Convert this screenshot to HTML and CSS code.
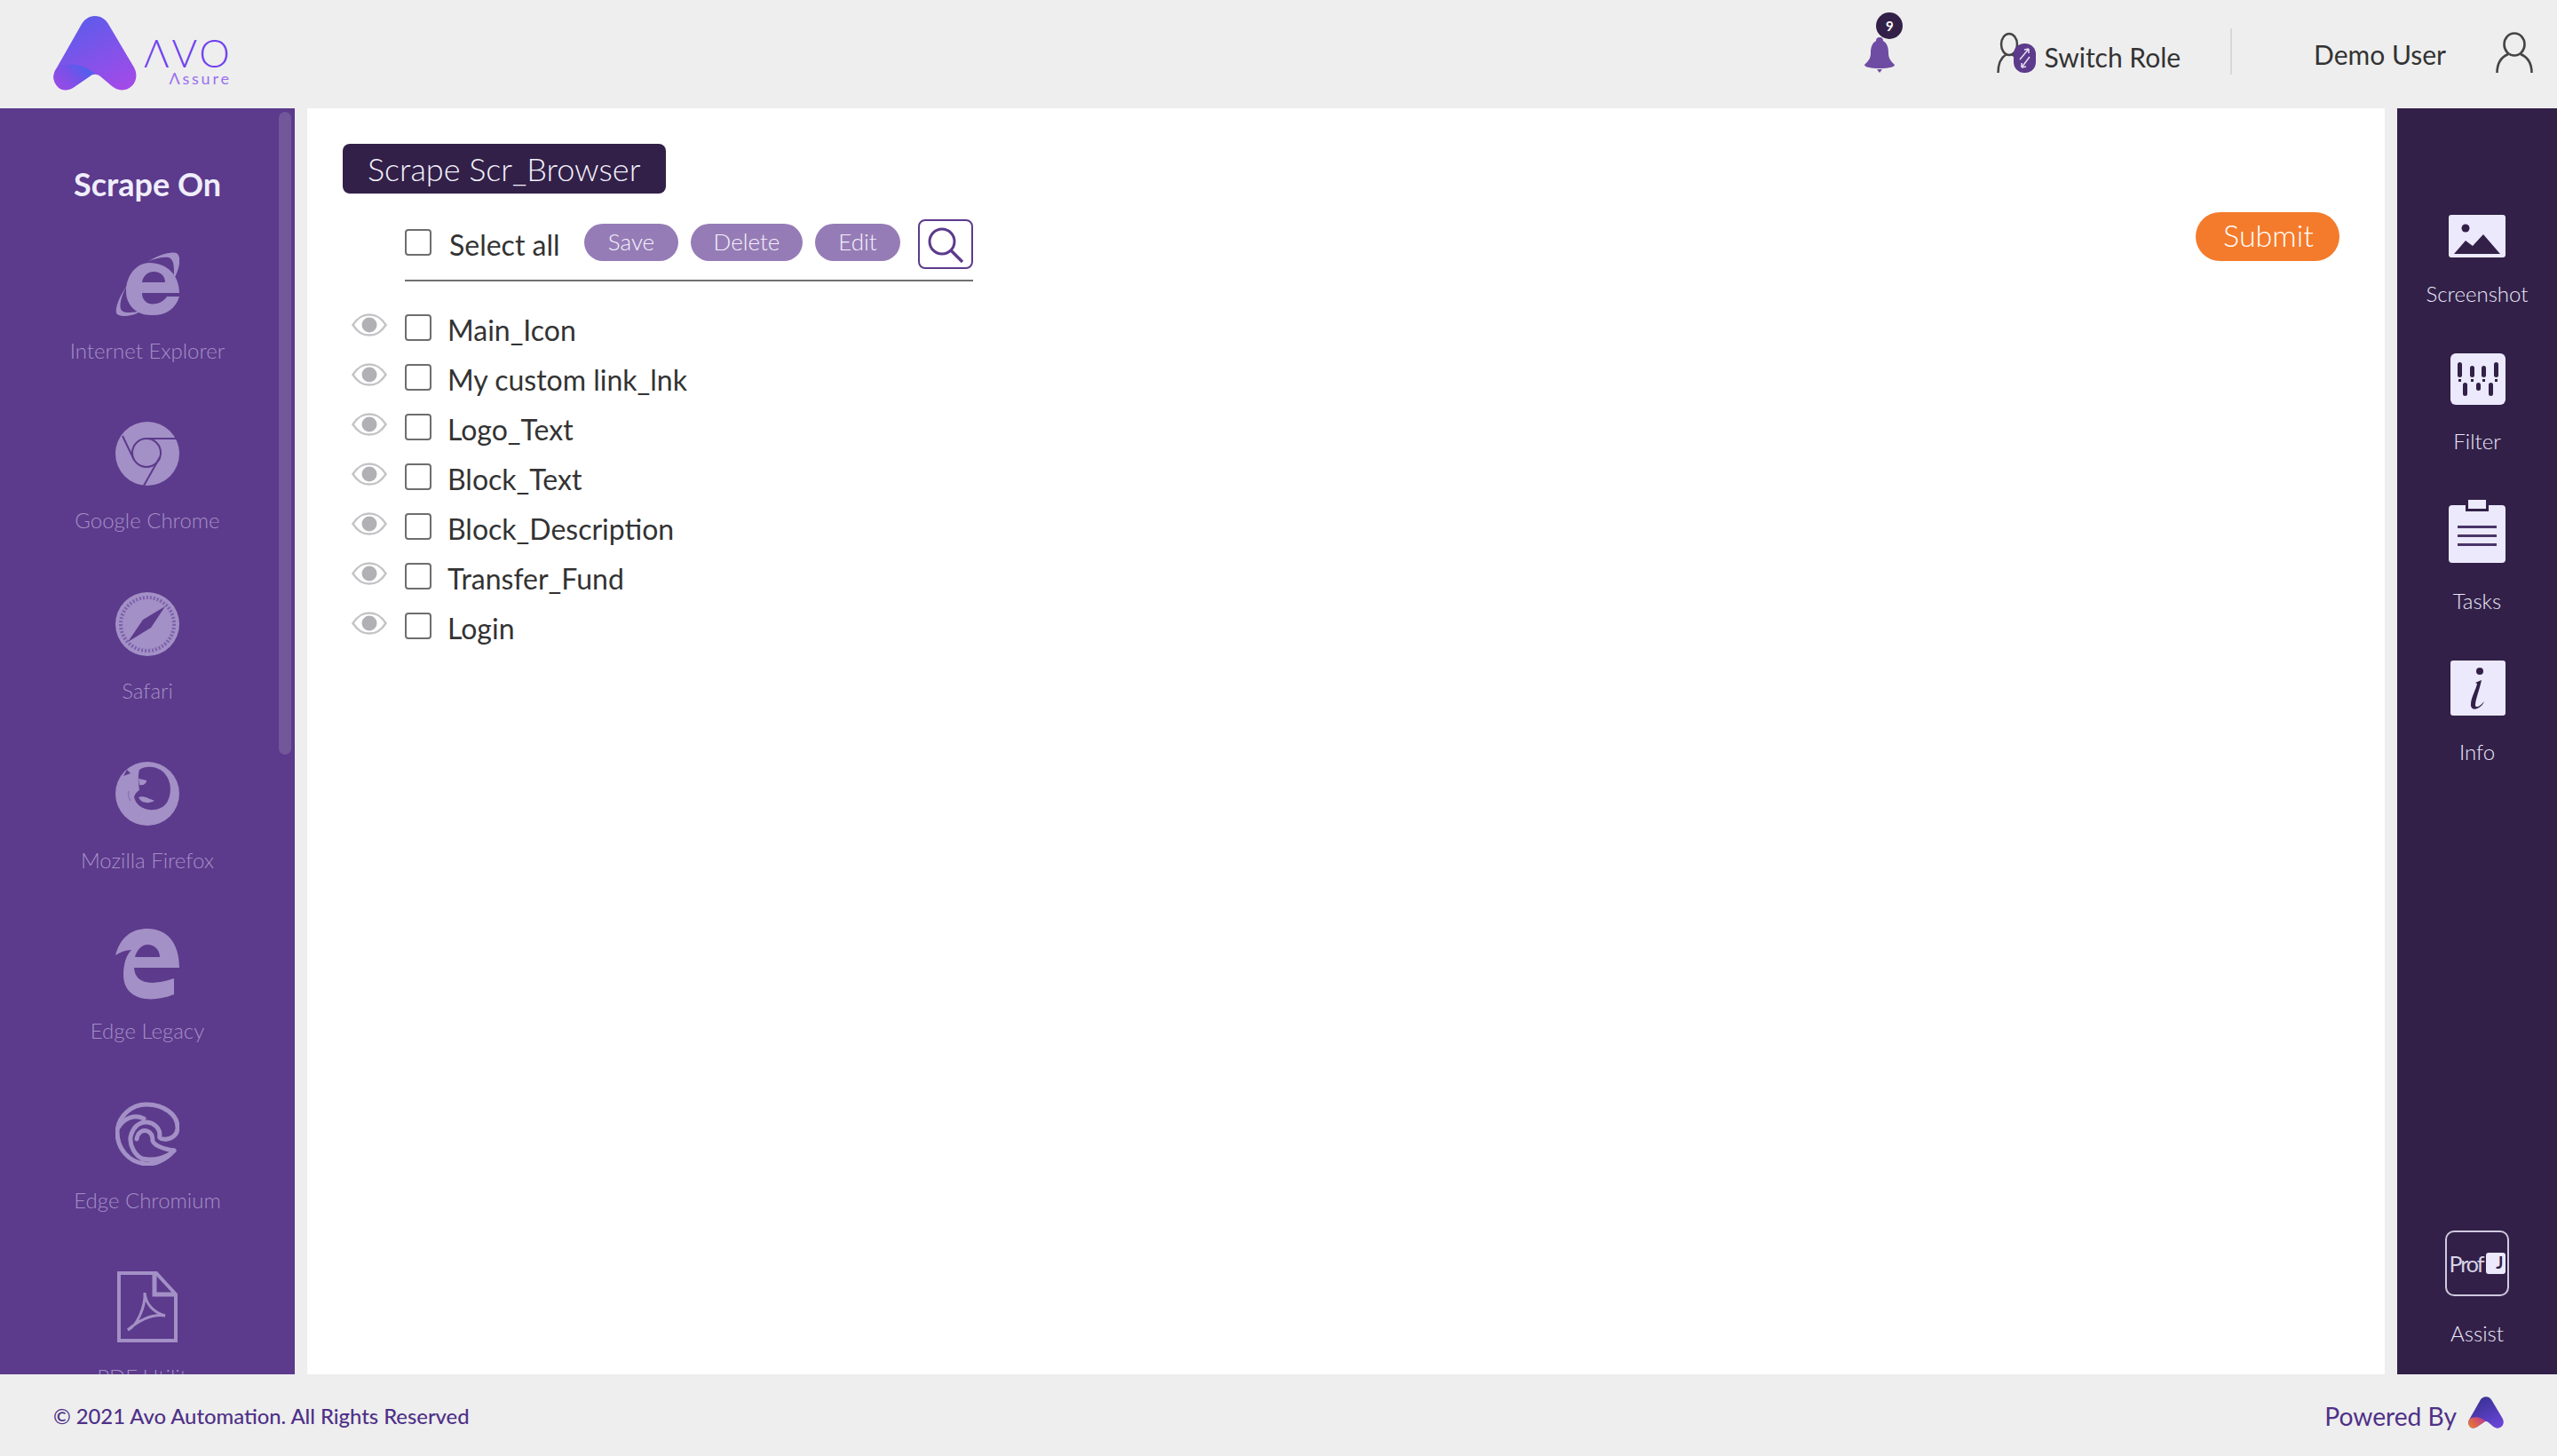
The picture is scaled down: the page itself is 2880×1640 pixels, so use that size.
FILE: index.html
```html
<!DOCTYPE html>
<html lang="en">
<head>
    <meta charset="UTF-8">
    <title>Avo Assure - Scrape</title>
    <link rel="stylesheet" href="styles.css">
</head>
<body>
    <svg class="defs" width="0" height="0">
        <defs>
            <linearGradient id="logoMain" x1="0.25" y1="0" x2="0.8" y2="1">
                <stop offset="0" stop-color="#5a5cec"/>
                <stop offset="1" stop-color="#a24be8"/>
            </linearGradient>
            <linearGradient id="logoWave" x1="0" y1="1" x2="1" y2="0.35">
                <stop offset="0" stop-color="#a04be4"/>
                <stop offset="0.55" stop-color="#7a50e8"/>
                <stop offset="1" stop-color="#4a62ee"/>
            </linearGradient>
            <linearGradient id="footMain" x1="0.2" y1="0" x2="0.8" y2="1">
                <stop offset="0" stop-color="#35308f"/>
                <stop offset="1" stop-color="#6a45d8"/>
            </linearGradient>
            <linearGradient id="footWave" x1="0" y1="1" x2="1" y2="0.4">
                <stop offset="0" stop-color="#f08020"/>
                <stop offset="1" stop-color="#c0408c"/>
            </linearGradient>
            <symbol id="eye" viewBox="0 0 40 26">
                <path d="M1.5 13 C8 3 14 1.5 20 1.5 C26 1.5 32 3 38.5 13 C32 23 26 24.5 20 24.5 C14 24.5 8 23 1.5 13Z" fill="none" stroke="#c4c4c6" stroke-width="2.5"/>
                <circle cx="20" cy="13" r="8.5" fill="#b1b1b5"/>
            </symbol>
        </defs>
    </svg>

    <header class="top-bar">
        <div class="brand">
            <svg class="brand-mark" viewBox="0 0 94 84" width="94" height="84">
                <path d="M47 0 C54 0 59 4 62 9 L91 58 C96 67 93 78 84 82 C77 85 71 83 66 79 L53 68 C49 65 45 65 41 68 L22 81 C15 85 7 84 3 77 C-1 71 0 65 3 60 L32 9 C35 4 40 0 47 0Z" fill="url(#logoMain)"/>
                <path d="M3 60 C13 52 31 52 47 65 C44 65 43 66 41 68 L22 81 C15 85 7 84 3 77 C-1 71 0 65 3 60Z" fill="url(#logoWave)"/>
            </svg>
            <div class="brand-text">
                <span class="brand-avo">ΛVO</span>
                <span class="brand-sub">Λssure</span>
            </div>
        </div>
        <div class="top-actions">
            <div class="bell">
                <svg viewBox="0 0 36 42" width="36" height="42">
                    <path d="M18 2 C21 2 22 4 22 6 C27 9 28 14 28 20 C28 26 31 29 35 33 C35 35 30 37 18 37 C6 37 1 35 1 33 C5 29 8 26 8 20 C8 14 9 9 14 6 C14 4 15 2 18 2Z" fill="#6f4ca3"/>
                    <path d="M15 38 L21 38 L18 42Z" fill="#6f4ca3"/>
                </svg>
                <span class="bell-badge">9</span>
            </div>
            <div class="switch-role">
                <svg viewBox="0 0 46 46" width="46" height="46">
                    <ellipse cx="14" cy="14" rx="9" ry="12" fill="none" stroke="#444" stroke-width="2.5"/>
                    <path d="M1.5 46 C1.5 34 6 28 11 25 M17 25 C20 27 22 29 24 32" fill="none" stroke="#444" stroke-width="2.5"/>
                    <rect x="19" y="13" width="25" height="33" rx="12" fill="#5c3a8c"/>
                    <path d="M26 31 L36 19 M36 19 L31 20 M36 19 L36 24 M37 28 L28 40 M28 40 L33 39 M28 40 L28 35" fill="none" stroke="#e6dff2" stroke-width="1.5"/>
                </svg>
                <span>Switch Role</span>
            </div>
            <div class="divider"></div>
            <span class="user-name">Demo User</span>
            <svg class="user-icon" viewBox="0 0 42 46" width="42" height="46">
                <ellipse cx="21" cy="14" rx="11.5" ry="12.5" fill="none" stroke="#444" stroke-width="2.6"/>
                <path d="M1.5 46 C1.5 34 7 28 14 25 M28 25 C35 28 40.5 34 40.5 46" fill="none" stroke="#444" stroke-width="2.6"/>
            </svg>
        </div>
    </header>

    <div class="middle">
        <aside class="browser-panel">
            <h3 class="panel-title">Scrape On</h3>
            <div class="browser-item">
                <div class="browser-icon">
                    <svg viewBox="0 0 72 72" width="72" height="72">
                        <path fill-rule="evenodd" d="M38 12 C58 12 72 26 72 46 L30 46 C30 56 38 60 46 58 C52 57 56 53 58 50 L72 50 C68 64 56 72 40 71 C24 71 12 60 12 44 C12 26 24 12 38 12Z M30 34 L56 34 C56 26 50 22 43 22 C36 22 31 27 30 34Z"/>
                        <path d="M36 11 C50 2 66 -2 70 2 C75 8 71 22 65 32 C67 18 66 8 60 6 C54 5 44 7 36 11Z"/>
                        <path d="M14 36 C4 50 -2 66 2 70 C8 74 20 72 30 66 C20 68 8 70 6 64 C4 58 8 46 14 36Z"/>
                    </svg>
                </div>
                <span class="browser-label">Internet Explorer</span>
            </div>
            <div class="browser-item">
                <div class="browser-icon">
                    <svg viewBox="0 0 72 72" width="72" height="72">
                        <circle cx="36" cy="36" r="36"/>
                        <g fill="none" stroke="#5c3a8c" stroke-width="2">
                            <circle cx="35" cy="35" r="16"/>
                            <path d="M35 19 L69 19 M8 16 L21 43 M50 40 L32 72"/>
                        </g>
                    </svg>
                </div>
                <span class="browser-label">Google Chrome</span>
            </div>
            <div class="browser-item">
                <div class="browser-icon">
                    <svg viewBox="0 0 72 72" width="72" height="72">
                        <circle cx="36" cy="36" r="36"/>
                        <circle cx="36" cy="36" r="30" fill="none" stroke="#7d60ab" stroke-width="4" stroke-dasharray="2 2"/>
                        <path d="M56 16 L40 40 L14 56 L31 31Z" fill="#5c3a8c"/>
                    </svg>
                </div>
                <span class="browser-label">Safari</span>
            </div>
            <div class="browser-item">
                <div class="browser-icon">
                    <svg viewBox="0 0 72 72" width="72" height="72">
                        <circle cx="36" cy="36" r="36"/>
                        <path d="M27 9 C36 3 50 6 56 14 C63 22 64 36 58 46 C54 52 46 55 38 54 C30 53 23 48 21 40 C22 36 24 34 27 32 C26 24 25 16 27 9Z" fill="#5c3a8c"/>
                        <path d="M26 19 L35 21 C35 25 31 27 27 26Z"/>
                        <path d="M26 40 C32 38 36 41 44 44 C38 47 30 48 26 40Z"/>
                        <path d="M13 9 L17 13 L9 16Z M3 8 L6 2 L9 11 L2 15Z" fill="#5c3a8c"/>
                        <path d="M15 33 C14 37 15 41 17 44" fill="none" stroke="#8c74b6" stroke-width="1.5"/>
                    </svg>
                </div>
                <span class="browser-label">Mozilla Firefox</span>
            </div>
            <div class="browser-item">
                <div class="browser-icon">
                    <svg viewBox="0 0 72 80" width="72" height="80">
                        <path fill-rule="evenodd" d="M0 30 C6 8 20 0 36 0 C58 0 72 16 72 44 L21 44 C22 60 36 66 66 56 L66 74 C36 86 9 78 9 52 C9 40 12 30 18 24 C12 24 6 26 0 30Z M22 32 L50 32 C50 24 44 18 36 18 C30 18 24 24 22 32Z"/>
                    </svg>
                </div>
                <span class="browser-label">Edge Legacy</span>
            </div>
            <div class="browser-item">
                <div class="browser-icon">
                    <svg viewBox="0 0 72 72" width="72" height="72">
                        <g class="swirl" fill="none" stroke-width="5" stroke-linecap="round">
                            <path d="M66 55 C56 66 44 71 34 70 C14 68 2 52 2 34 C3 16 18 3 35 3 C54 3 70 14 70 29 C70 38 62 43 54 42 C50 42 49 40 50 37 C50 30 44 24 36 23 C26 22 19 30 17 40 C16 50 22 60 30 64 C44 67 58 63 66 55"/>
                            <path d="M4 28 C10 18 22 14 32 19"/>
                            <path d="M24 42 C25 35 30 31 36 33 C41 35 42 39 42 44 C44 50 54 53 66 55"/>
                        </g>
                    </svg>
                </div>
                <span class="browser-label">Edge Chromium</span>
            </div>
            <div class="browser-item browser-item-pdf">
                <div class="browser-icon">
                    <svg viewBox="0 0 68 80" width="68" height="80">
                        <g class="swirl" fill="none" stroke-width="4">
                            <path d="M2 2 L44 2 L66 26 L66 78 L2 78Z"/>
                            <path d="M42 2 L42 26 L66 26" stroke-width="5"/>
                            <path d="M12 66 C22 62 32 40 31 24 C32 36 40 46 54 50 C40 48 26 54 12 66Z" stroke-width="3"/>
                        </g>
                    </svg>
                </div>
                <span class="browser-label">PDF Utility</span>
            </div>
            <div class="panel-scrollbar"></div>
        </aside>

        <main class="content">
            <div class="content-head">
                <div>
                    <div class="scrape-title">Scrape Scr_Browser</div>
                    <div class="toolbar">
                        <span class="check"></span>
                        <span class="select-all">Select all</span>
                        <button class="pill pill-save">Save</button>
                        <button class="pill pill-delete">Delete</button>
                        <button class="pill pill-edit">Edit</button>
                        <span class="search-box">
                            <svg viewBox="0 0 44 44" width="44" height="44">
                                <circle cx="18" cy="19" r="14" fill="none" stroke="#5c3a8c" stroke-width="3"/>
                                <path d="M28 29 L41 42" stroke="#5c3a8c" stroke-width="3.4"/>
                            </svg>
                        </span>
                    </div>
                </div>
                <button class="submit">Submit</button>
            </div>
            <ul class="object-list">
                <li class="object-row"><svg class="eye-icon"><use href="#eye"/></svg><span class="check"></span><span class="object-name">Main_Icon</span></li>
                <li class="object-row"><svg class="eye-icon"><use href="#eye"/></svg><span class="check"></span><span class="object-name">My custom link_lnk</span></li>
                <li class="object-row"><svg class="eye-icon"><use href="#eye"/></svg><span class="check"></span><span class="object-name">Logo_Text</span></li>
                <li class="object-row"><svg class="eye-icon"><use href="#eye"/></svg><span class="check"></span><span class="object-name">Block_Text</span></li>
                <li class="object-row"><svg class="eye-icon"><use href="#eye"/></svg><span class="check"></span><span class="object-name">Block_Description</span></li>
                <li class="object-row"><svg class="eye-icon"><use href="#eye"/></svg><span class="check"></span><span class="object-name">Transfer_Fund</span></li>
                <li class="object-row"><svg class="eye-icon"><use href="#eye"/></svg><span class="check"></span><span class="object-name">Login</span></li>
            </ul>
        </main>

        <aside class="action-panel">
            <div class="action-item action-screenshot">
                <svg viewBox="0 0 64 48" width="64" height="48">
                    <rect width="64" height="48" rx="3" fill="#ebe9fb"/>
                    <circle cx="19" cy="15" r="4.5" fill="#322048"/>
                    <path d="M6 44 L19 29 L27 35 L39 22 L58 44Z" fill="#322048"/>
                </svg>
                <span>Screenshot</span>
            </div>
            <div class="action-item action-filter">
                <svg viewBox="0 0 62 58" width="62" height="58">
                    <rect width="62" height="58" rx="6" fill="#ebe9fb"/>
                    <g fill="#322048">
                        <rect x="8" y="10" width="5" height="17" rx="2.5"/><rect x="9" y="29" width="3" height="3"/>
                        <rect x="22" y="14" width="5" height="13" rx="2.5"/><rect x="23" y="29" width="3" height="3"/>
                        <rect x="35" y="14" width="5" height="13" rx="2.5"/><rect x="36" y="29" width="3" height="3"/>
                        <rect x="49" y="10" width="5" height="17" rx="2.5"/><rect x="50" y="29" width="3" height="3"/>
                        <rect x="14" y="33" width="5" height="15" rx="2.5"/>
                        <rect x="29" y="33" width="5" height="9" rx="2.5"/>
                        <rect x="43" y="33" width="5" height="15" rx="2.5"/>
                    </g>
                </svg>
                <span>Filter</span>
            </div>
            <div class="action-item action-tasks">
                <svg viewBox="0 0 64 71" width="64" height="71">
                    <path d="M4 6 L19 6 L19 13 L45 13 L45 6 L60 6 Q64 6 64 10 L64 67 Q64 71 60 71 L4 71 Q0 71 0 67 L0 10 Q0 6 4 6Z" fill="#ebe9fb"/>
                    <rect x="22" y="0" width="20" height="10" fill="#ebe9fb"/>
                    <g fill="#4a3468">
                        <rect x="10" y="29" width="44" height="3"/>
                        <rect x="10" y="39" width="44" height="3"/>
                        <rect x="10" y="49" width="44" height="3"/>
                    </g>
                </svg>
                <span>Tasks</span>
            </div>
            <div class="action-item action-info">
                <svg viewBox="0 0 62 62" width="62" height="62">
                    <rect width="62" height="62" rx="3" fill="#ebe9fb"/>
                    <circle cx="33" cy="12" r="4" fill="#322048"/>
                    <path d="M28 25 L35 22 C33 32 28 44 28 50 C28 54 33 52 38 46 C34 56 22 58 23 49 C23 42 29 32 30 26Z" fill="#322048"/>
                </svg>
                <span>Info</span>
            </div>
            <div class="action-item action-assist">
                <div class="assist-box">
                    <span class="assist-prof">Prof</span><span class="assist-j">J</span>
                </div>
                <span>Assist</span>
            </div>
        </aside>
    </div>

    <footer class="bottom-bar">
        <span class="copyright">© 2021 Avo Automation. All Rights Reserved</span>
        <div class="powered">
            <span>Powered By</span>
            <svg viewBox="0 0 94 84" width="40" height="36">
                <path d="M47 0 C54 0 59 4 62 9 L91 58 C96 67 93 78 84 82 C77 85 71 83 66 79 L53 68 C49 65 45 65 41 68 L22 81 C15 85 7 84 3 77 C-1 71 0 65 3 60 L32 9 C35 4 40 0 47 0Z" fill="url(#footMain)"/>
                <path d="M3 60 C13 52 31 52 47 65 C44 65 43 66 41 68 L22 81 C15 85 7 84 3 77 C-1 71 0 65 3 60Z" fill="url(#footWave)"/>
            </svg>
        </div>
    </footer>
</body>
</html>
```

FILE: styles.css
```css
* {
    box-sizing: border-box;
}
html, body {
    height: 100%;
}
body {
    margin: 0;
    display: flex;
    flex-direction: column;
    background-color: #eeeeee;
    color: #333;
    font-family: Lato, "Open Sans", sans-serif;
    overflow: hidden;
}
.defs {
    position: absolute;
}

/* header */
.top-bar {
    height: 122px;
    flex: none;
    display: flex;
    justify-content: space-between;
    padding: 18px 27px 0 60px;
}
.brand {
    display: flex;
    align-items: flex-start;
}
.brand-text {
    display: flex;
    flex-direction: column;
    align-items: flex-end;
    margin-left: 8px;
    margin-top: 21px;
    color: #6f42f0;
}
.brand-avo {
    font-size: 43.5px;
    font-weight: 300;
    letter-spacing: 3px;
    line-height: 40px;
    margin-right: -3px;
}
.brand-sub {
    font-size: 18px;
    letter-spacing: 2.8px;
    line-height: 18px;
    margin-right: -2px;
    color: #9a6ff0;
}
.top-actions {
    display: flex;
    align-items: flex-start;
}
.bell {
    position: relative;
    width: 36px;
    margin-top: 22px;
}
.bell-badge {
    position: absolute;
    left: 14px;
    top: -26px;
    width: 30px;
    height: 30px;
    border-radius: 50%;
    background-color: #322048;
    color: #fff;
    font-size: 15px;
    font-weight: 700;
    line-height: 30px;
    text-align: center;
}
.switch-role {
    display: flex;
    align-items: center;
    margin-left: 114px;
    margin-top: 18px;
    font-size: 30px;
}
.switch-role span {
    margin-left: 7px;
    margin-top: 10px;
}
.divider {
    width: 2px;
    height: 52px;
    margin: 14px 92px 0 56px;
    background-color: #d8d8d8;
}
.user-name {
    font-size: 30px;
    margin-top: 25px;
}
.user-icon {
    margin-left: 56px;
    margin-top: 18px;
}

/* middle area */
.middle {
    flex: 1;
    min-height: 0;
    display: flex;
    gap: 14px;
}
.browser-panel {
    position: relative;
    width: 332px;
    flex: none;
    overflow: hidden;
    background-color: #5c3a8c;
    display: flex;
    flex-direction: column;
    align-items: center;
}
.panel-title {
    margin: 63px 0 0 0;
    height: 95px;
    flex: none;
    font-size: 36px;
    font-weight: 700;
    line-height: 44px;
    color: #f0eefc;
}
.browser-item {
    height: 191.4px;
    flex: none;
    display: flex;
    flex-direction: column;
    align-items: center;
    color: #a390c6;
}
.browser-icon {
    height: 80px;
    display: flex;
    align-items: center;
    justify-content: center;
    fill: #a390c6;
}
.swirl {
    stroke: #a390c6;
}
.browser-label {
    margin-top: 20px;
    font-size: 24px;
    font-weight: 300;
    line-height: 30px;
}
.browser-item-pdf .browser-icon {
    margin-top: 4px;
    margin-bottom: 4px;
}
.panel-scrollbar {
    position: absolute;
    right: 4px;
    top: 4px;
    width: 14px;
    height: 724px;
    border-radius: 7px;
    background-color: #72579b;
}

.content {
    flex: 1;
    min-width: 0;
    background-color: #fff;
    padding: 40px 51px 0 40px;
}
.content-head {
    display: flex;
    justify-content: space-between;
    align-items: flex-start;
}
.scrape-title {
    display: inline-block;
    height: 56px;
    width: 364px;
    padding-left: 28px;
    border-radius: 8px;
    background-color: #322048;
    color: #f4f2fc;
    font-size: 36px;
    font-weight: 300;
    line-height: 56px;
}
.toolbar {
    display: flex;
    align-items: center;
    width: 640px;
    height: 71px;
    margin: 28px 0 0 70px;
    padding-bottom: 15px;
    border-bottom: 2px solid #707070;
}
.check {
    display: inline-block;
    width: 30px;
    height: 30px;
    flex: none;
    border: 2px solid #6e6e6e;
    border-radius: 4px;
    background-color: #fff;
}
.select-all {
    margin-left: 20px;
    font-size: 32px;
    margin-top: 4px;
    width: 152px;
}
.pill {
    height: 42px;
    margin-right: 14px;
    margin-top: -1px;
    padding: 0 0 2px 0;
    border: none;
    border-radius: 21px;
    background-color: #967cb6;
    color: #f4f2fc;
    font-family: inherit;
    font-size: 26px;
    font-weight: 300;
}
.pill-save { width: 106px; }
.pill-delete { width: 126px; }
.pill-edit { width: 96px; margin-right: 20px; }
.search-box {
    width: 62px;
    height: 56px;
    flex: none;
    margin-top: 3px;
    display: flex;
    align-items: center;
    justify-content: center;
    border: 2px solid #5c3a8c;
    border-radius: 8px;
}
.submit {
    width: 162px;
    height: 55px;
    margin-top: 77px;
    padding: 0 0 4px 2px;
    border: none;
    border-radius: 28px;
    background-color: #f47b2b;
    color: #fff;
    font-family: inherit;
    font-size: 34px;
    font-weight: 300;
}
.object-list {
    list-style: none;
    margin: 24px 0 0 0;
    padding: 0 0 0 10px;
}
.object-row {
    height: 56px;
    display: flex;
    align-items: center;
}
.eye-icon {
    width: 40px;
    height: 26px;
    flex: none;
    margin: -7px 20px 0 0;
}
.object-name {
    margin: 4px 0 0 18px;
    font-size: 32px;
}

/* right panel */
.action-panel {
    width: 180px;
    flex: none;
    display: flex;
    flex-direction: column;
    align-items: center;
    padding-top: 120px;
    background-color: #322048;
    color: #ebe9fb;
}
.action-item {
    display: flex;
    flex-direction: column;
    align-items: center;
    font-size: 24px;
    font-weight: 300;
    line-height: 30px;
}
.action-screenshot svg { margin-bottom: 26px; }
.action-filter { margin-top: 52px; }
.action-filter svg { margin-bottom: 26px; margin-left: 2px; }
.action-tasks { margin-top: 51px; }
.action-tasks svg { margin-bottom: 28px; }
.action-info { margin-top: 52px; }
.action-info svg { margin-bottom: 26px; margin-left: 2px; }
.action-assist {
    margin-top: auto;
    margin-bottom: 31px;
}
.assist-box {
    width: 72px;
    height: 74px;
    margin-bottom: 27px;
    display: flex;
    align-items: center;
    justify-content: center;
    border: 2px solid #cfc9de;
    border-radius: 10px;
}
.assist-prof {
    font-size: 25px;
    font-weight: 400;
    letter-spacing: -2px;
    color: #d8d3e6;
}
.assist-j {
    width: 22px;
    height: 24px;
    margin-left: 3px;
    border-radius: 3px;
    background-color: #ebe9fb;
    color: #322048;
    font-size: 19px;
    font-weight: 700;
    line-height: 22px;
    text-align: right;
    padding-right: 2px;
}

/* footer */
.bottom-bar {
    height: 92px;
    flex: none;
    display: flex;
    justify-content: space-between;
    align-items: center;
    padding: 0 60px;
    color: #4f3188;
}
.copyright {
    margin-top: 2px;
    font-size: 23.8px;
    font-weight: 500;
}
.powered {
    display: flex;
    align-items: center;
    gap: 13px;
    font-size: 28.2px;
}
.powered span {
    margin-top: 2px;
}
.powered svg {
    margin-top: -7px;
}
```
